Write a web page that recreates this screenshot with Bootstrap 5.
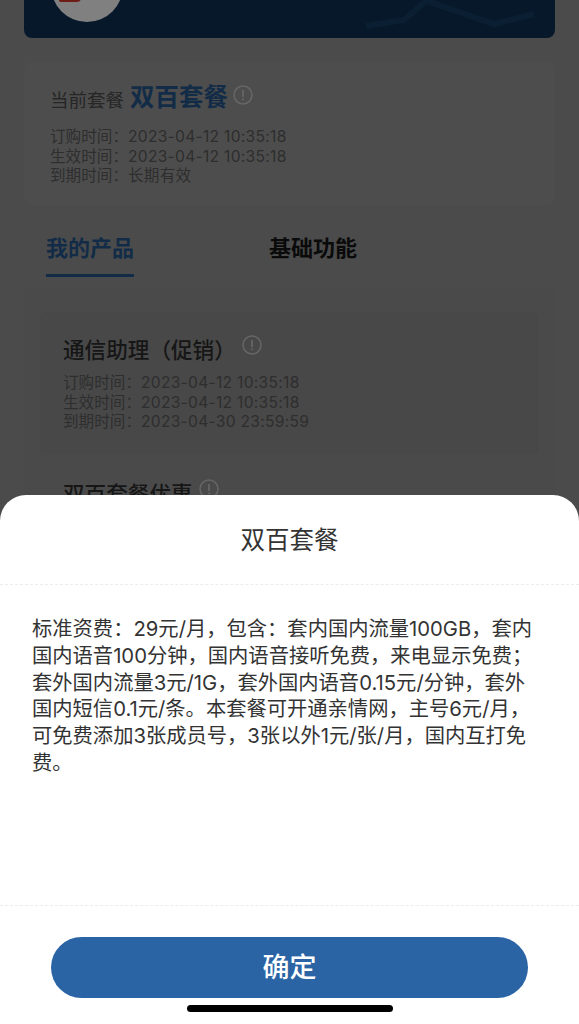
<!DOCTYPE html>
<html lang="zh">
<head>
<meta charset="utf-8">
<link href="https://cdn.jsdelivr.net/npm/bootstrap@5.3.0/dist/css/bootstrap.min.css" rel="stylesheet">
<style>
html,body{height:1024px;overflow:hidden;}
body{background:#4b4b4b;font-family:Inter,"Noto Sans CJK SC",sans-serif;position:relative;}
.stage{height:1024px;overflow:hidden;padding:0 24px;}
.hero{height:38px;background:#07182a;border-radius:0 0 8px 8px;position:relative;overflow:hidden;}
.hero-avatar{position:absolute;left:27px;top:-50px;width:72px;height:72px;border-radius:50%;background:#808080;overflow:hidden;}
.hero-avatar i{position:absolute;left:8px;top:48px;width:22px;height:4px;background:#6e1c16;border-radius:0 0 14px 6px;}
.hero-mark{position:absolute;left:340px;top:-6px;}
.plan-box{margin-top:24px;height:143px;background:#4d4d4d;border-radius:8px;padding:18px 26px 0;}
.plan-head{display:flex;align-items:flex-start;height:47px;}
.plan-label{font-size:18.5px;line-height:30px;margin-top:5px;color:#262626;}
.plan-name{font-size:24.5px;font-weight:700;line-height:34px;color:#122c48;margin-left:6px;}
.tip-ring{display:block;margin-left:5px;margin-top:5px;flex:none;}
.meta{font-size:15.6px;line-height:19.5px;color:#2e2e2e;margin:0;}
.meta span{letter-spacing:.28px;}
.tabs-row{display:flex;padding:0 22px;height:84px;align-items:flex-start;padding-top:28px;}
.tab-on{font-size:22px;font-weight:700;line-height:30px;color:#122c48;border-bottom:3px solid #122c48;padding-bottom:11px;width:88px;white-space:nowrap;}
.tab-off{font-size:22px;font-weight:700;line-height:30px;color:#0a0a0a;margin-left:135px;}
.prod-wrap{background:#4a4a4a;border-radius:8px;padding:23px 16px;height:400px;}
.prod-card{background:#484848;border-radius:6px;height:143px;padding:23px 23px 0;}
.prod-head{display:flex;align-items:flex-start;height:38px;}
.prod-head .tip-ring{margin-top:0;margin-left:6px;}
.prod-title{font-size:21.6px;font-weight:500;line-height:30px;color:#161616;white-space:nowrap;}
.prod-list{padding:24px 23px 0;}
.sheet{position:absolute;left:0;right:0;top:495px;height:529px;background:#fff;border-radius:26px 26px 0 0;display:flex;flex-direction:column;}
.sheet-title{height:90px;border-bottom:1px dashed #ececec;font-size:24.5px;line-height:91px;text-align:center;color:#333;}
.sheet-body{height:321px;padding:31px 40px 0 32px;font-size:20.3px;line-height:26.8px;color:#333;border-bottom:1px dashed #ececec;}
.sheet-foot{padding:31px 51px 0;}
.ok-btn{display:block;width:100%;height:61px;border-radius:31px;background:#2a64a5;border:0;color:#fff;font-size:27px;line-height:61px;padding:0;font-weight:500;}
.home-bar{position:absolute;left:187px;top:1005px;width:206px;height:7px;border-radius:4px;background:#000;}
</style>
</head>
<body>
<div class="stage">
  <div class="hero">
    <div class="hero-avatar"><i></i></div>
    <svg class="hero-mark" width="200" height="40" viewBox="0 0 200 40" fill="none" stroke="#0b1f33" stroke-width="6"><path d="M2 32 40 26 70 0"/><path d="M60 6 130 30 170 20"/></svg>
  </div>
  <div class="plan-box">
    <div class="plan-head">
      <span class="plan-label">当前套餐</span>
      <span class="plan-name">双百套餐</span>
      <svg class="tip-ring" width="20" height="20" viewBox="0 0 20 20" fill="none" stroke="#666"><circle cx="10" cy="10" r="9" stroke-width="1.5"/><path d="M10 5v7" stroke-width="1.8"/><path d="M10 13.6v1.6" stroke-width="1.8"/></svg>
    </div>
    <p class="meta">订购时间：<span>2023-04-12 10:35:18</span></p>
    <p class="meta">生效时间：<span>2023-04-12 10:35:18</span></p>
    <p class="meta">到期时间：<span>长期有效</span></p>
  </div>
  <div class="tabs-row">
    <div class="tab-on">我的产品</div>
    <div class="tab-off">基础功能</div>
  </div>
  <div class="prod-wrap">
    <div class="prod-card">
      <div class="prod-head"><span class="prod-title">通信助理（促销）</span><svg class="tip-ring" width="20" height="20" viewBox="0 0 20 20" fill="none" stroke="#666"><circle cx="10" cy="10" r="9" stroke-width="1.5"/><path d="M10 5v7" stroke-width="1.8"/><path d="M10 13.6v1.6" stroke-width="1.8"/></svg></div>
      <p class="meta">订购时间：<span>2023-04-12 10:35:18</span></p>
      <p class="meta">生效时间：<span>2023-04-12 10:35:18</span></p>
      <p class="meta">到期时间：<span>2023-04-30 23:59:59</span></p>
    </div>
    <div class="prod-list">
      <div class="prod-head"><span class="prod-title">双百套餐优惠</span><svg class="tip-ring" width="20" height="20" viewBox="0 0 20 20" fill="none" stroke="#666"><circle cx="10" cy="10" r="9" stroke-width="1.5"/><path d="M10 5v7" stroke-width="1.8"/><path d="M10 13.6v1.6" stroke-width="1.8"/></svg></div>
    </div>
  </div>
</div>
<div class="sheet">
  <div class="sheet-title">双百套餐</div>
  <div class="sheet-body">标准资费：29元/月，包含：套内国内流量100GB，套内国内语音100分钟，国内语音接听免费，来电显示免费；套外国内流量3元/1G，套外国内语音0.15元/分钟，套外国内短信0.1元/条。本套餐可开通亲情网，主号6元/月，可免费添加3张成员号，3张以外1元/张/月，国内互打免费。</div>
  <div class="sheet-foot"><button type="button" class="btn ok-btn">确定</button></div>
</div>
<div class="home-bar"></div>
<script src="https://cdn.jsdelivr.net/npm/bootstrap@5.3.0/dist/js/bootstrap.bundle.min.js"></script>
</body>
</html>
